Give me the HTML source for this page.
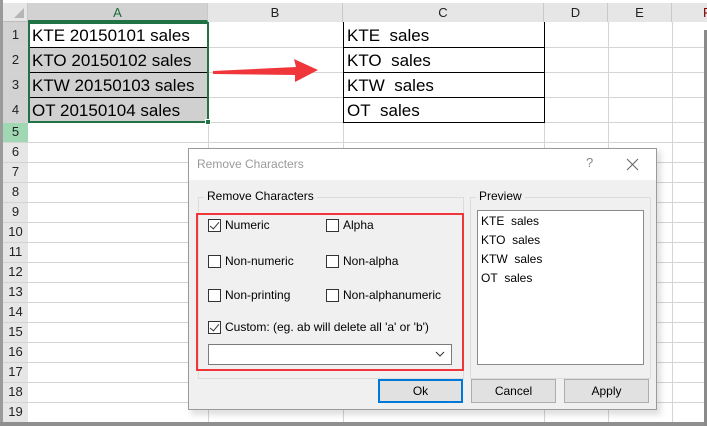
<!DOCTYPE html>
<html><head><meta charset="utf-8"><style>
*{margin:0;padding:0;box-sizing:border-box}
body{width:707px;height:426px;overflow:hidden;background:#fff;position:relative;font-family:"Liberation Sans",Arial,sans-serif}
.a{position:absolute}
.hl{position:absolute;height:1px;background:#d4d4d4}
.vl{position:absolute;width:1px;background:#d4d4d4}
.rn{position:absolute;left:3px;width:25px;text-align:center;font-size:13px;color:#222;background:#e6e6e6}
.ch{position:absolute;top:3px;height:19px;text-align:center;font-size:13px;line-height:19px;background:#e6e6e6;border-right:1px solid #c8c8c8;color:#222}
.cell{position:absolute;font-size:17px;line-height:25px;padding-left:4px;color:#000}
.dl{font-family:"Liberation Sans",Tahoma,sans-serif;font-size:12px;color:#000}
.cb{position:absolute;width:13px;height:13px;border:1px solid #333;background:#fff}
.cb.on::after{content:"";position:absolute;left:3px;top:0px;width:4px;height:8px;border:solid #333;border-width:0 1.5px 1.5px 0;transform:rotate(40deg)}
.lbl{position:absolute;font-size:12px}
.btn{position:absolute;top:379px;width:85px;height:24px;background:#e1e1e1;border:1px solid #adadad;text-align:center;line-height:22px;font-size:12px}
</style></head><body>
<div class="a" style="left:0;top:0;width:3px;height:426px;background:#9a9a9a"></div>
<div class="a" style="left:3px;top:3px;width:704px;height:19px;background:#e6e6e6;border-bottom:1px solid #bdbdbd"></div>
<div class="a" style="left:3px;top:3px;width:25px;height:19px;border-right:1px solid #c8c8c8"></div>
<div class="a" style="left:14px;top:8px;width:0;height:0;border-left:10px solid transparent;border-bottom:10px solid #b5b5b5"></div>
<div class="ch" style="left:28px;width:180px;background:#d2d2d2;color:#1e6b3a;border-bottom:2px solid #217346">A</div>
<div class="ch" style="left:208px;width:135px">B</div>
<div class="ch" style="left:343px;width:201px">C</div>
<div class="ch" style="left:544px;width:64px">D</div>
<div class="ch" style="left:608px;width:64px">E</div>
<div class="ch" style="left:672px;width:40px;text-align:left;padding-left:31px;color:#700">F</div>
<div class="a" style="left:3px;top:22px;width:25px;height:402px;background:#e6e6e6;border-right:1px solid #bdbdbd"></div>
<div class="rn" style="top:22px;height:25px;line-height:25px;background:#d2d2d2">1</div>
<div class="rn" style="top:47px;height:25px;line-height:25px;background:#d2d2d2">2</div>
<div class="rn" style="top:72px;height:25px;line-height:25px;background:#d2d2d2">3</div>
<div class="rn" style="top:97px;height:25px;line-height:25px;background:#d2d2d2">4</div>
<div class="rn" style="top:122px;height:20px;line-height:20px;background:#a0d8b3">5</div>
<div class="rn" style="top:142px;height:20px;line-height:20px">6</div>
<div class="rn" style="top:162px;height:20px;line-height:20px">7</div>
<div class="rn" style="top:182px;height:20px;line-height:20px">8</div>
<div class="rn" style="top:202px;height:20px;line-height:20px">9</div>
<div class="rn" style="top:222px;height:20px;line-height:20px">10</div>
<div class="rn" style="top:242px;height:20px;line-height:20px">11</div>
<div class="rn" style="top:262px;height:20px;line-height:20px">12</div>
<div class="rn" style="top:282px;height:20px;line-height:20px">13</div>
<div class="rn" style="top:302px;height:20px;line-height:20px">14</div>
<div class="rn" style="top:322px;height:20px;line-height:20px">15</div>
<div class="rn" style="top:342px;height:20px;line-height:20px">16</div>
<div class="rn" style="top:362px;height:20px;line-height:20px">17</div>
<div class="rn" style="top:382px;height:20px;line-height:20px">18</div>
<div class="rn" style="top:402px;height:20px;line-height:20px">19</div>
<div class="hl" style="left:3px;top:47px;width:704px"></div>
<div class="hl" style="left:3px;top:72px;width:704px"></div>
<div class="hl" style="left:3px;top:97px;width:704px"></div>
<div class="hl" style="left:3px;top:122px;width:704px"></div>
<div class="hl" style="left:3px;top:142px;width:704px"></div>
<div class="hl" style="left:3px;top:162px;width:704px"></div>
<div class="hl" style="left:3px;top:182px;width:704px"></div>
<div class="hl" style="left:3px;top:202px;width:704px"></div>
<div class="hl" style="left:3px;top:222px;width:704px"></div>
<div class="hl" style="left:3px;top:242px;width:704px"></div>
<div class="hl" style="left:3px;top:262px;width:704px"></div>
<div class="hl" style="left:3px;top:282px;width:704px"></div>
<div class="hl" style="left:3px;top:302px;width:704px"></div>
<div class="hl" style="left:3px;top:322px;width:704px"></div>
<div class="hl" style="left:3px;top:342px;width:704px"></div>
<div class="hl" style="left:3px;top:362px;width:704px"></div>
<div class="hl" style="left:3px;top:382px;width:704px"></div>
<div class="hl" style="left:3px;top:402px;width:704px"></div>
<div class="vl" style="left:208px;top:22px;height:402px"></div>
<div class="vl" style="left:343px;top:22px;height:402px"></div>
<div class="vl" style="left:544px;top:22px;height:402px"></div>
<div class="vl" style="left:608px;top:22px;height:402px"></div>
<div class="vl" style="left:672px;top:22px;height:402px"></div>
<div class="a" style="left:0;top:422px;width:707px;height:4px;background:#8f8f8f"></div>
<div class="a" style="left:704px;top:30px;width:3px;height:396px;background:#8a8a8a"></div>
<div class="a" style="left:29px;top:47px;width:179px;height:75px;background:#d0d0d0"></div>
<div class="a" style="left:29px;top:47px;width:179px;height:1px;background:#000"></div>
<div class="a" style="left:29px;top:72px;width:179px;height:1px;background:#000"></div>
<div class="a" style="left:29px;top:97px;width:179px;height:1px;background:#000"></div>
<div class="cell" style="left:28px;top:23px">KTE 20150101 sales</div>
<div class="cell" style="left:28px;top:48px">KTO 20150102 sales</div>
<div class="cell" style="left:28px;top:73px">KTW 20150103 sales</div>
<div class="cell" style="left:28px;top:98px">OT 20150104 sales</div>
<div class="a" style="left:28px;top:22px;width:181px;height:101px;border:2px solid #217346"></div>
<div class="a" style="left:205px;top:119px;width:6px;height:6px;background:#217346;border:1px solid #fff"></div>
<div class="a" style="left:343px;top:22px;width:202px;height:101px;border:1px solid #000;border-top:none"></div>
<div class="a" style="left:343px;top:47px;width:202px;height:1px;background:#000"></div>
<div class="a" style="left:343px;top:72px;width:202px;height:1px;background:#000"></div>
<div class="a" style="left:343px;top:97px;width:202px;height:1px;background:#000"></div>
<div class="cell" style="left:343px;top:23px">KTE&nbsp; sales</div>
<div class="cell" style="left:343px;top:48px">KTO&nbsp; sales</div>
<div class="cell" style="left:343px;top:73px">KTW&nbsp; sales</div>
<div class="cell" style="left:343px;top:98px">OT&nbsp; sales</div>
<svg class="a" style="left:210px;top:58px" width="115" height="30"><polygon points="3,13 86,9 84,1 108,12 85,24 85,17 3,16" fill="#f0363a"/></svg>
<div class="a" style="left:191px;top:151px;width:470px;height:264px;background:rgba(0,0,0,0.12);filter:blur(3px)"></div>
<div class="a dl" style="left:188px;top:148px;width:469px;height:262px;background:#f0f0f0;border:1px solid #9a9a9a">
  <div class="a" style="left:0;top:0;width:467px;height:31px;background:#fff"></div>
  <div class="a" style="left:8px;top:8px;color:#9a9a9a;font-size:12px">Remove Characters</div>
  <div class="a" style="left:397px;top:6px;color:#888;font-size:13px">?</div>
  <svg class="a" style="left:437px;top:9px" width="13" height="13"><path d="M1 1L12 12M12 1L1 12" stroke="#666" stroke-width="1"/></svg>
  <div class="a" style="left:9px;top:48px;width:266px;height:182px;border:1px solid #dcdcdc"></div>
  <div class="a" style="left:15px;top:40px;background:#f0f0f0;padding:0 3px">Remove Characters</div>
  <div class="a" style="left:281px;top:48px;width:181px;height:182px;border:1px solid #dcdcdc"></div>
  <div class="a" style="left:287px;top:40px;background:#f0f0f0;padding:0 3px">Preview</div>
  <div class="a" style="left:7px;top:64px;width:268px;height:158px;border:2px solid #f0363a"></div>
  <div class="cb on" style="left:19px;top:70px"></div><div class="lbl" style="left:36px;top:69px">Numeric</div>
  <div class="cb" style="left:137px;top:70px"></div><div class="lbl" style="left:154px;top:69px">Alpha</div>
  <div class="cb" style="left:19px;top:106px"></div><div class="lbl" style="left:36px;top:105px">Non-numeric</div>
  <div class="cb" style="left:137px;top:106px"></div><div class="lbl" style="left:154px;top:105px">Non-alpha</div>
  <div class="cb" style="left:19px;top:140px"></div><div class="lbl" style="left:36px;top:139px">Non-printing</div>
  <div class="cb" style="left:137px;top:140px"></div><div class="lbl" style="left:154px;top:139px">Non-alphanumeric</div>
  <div class="cb on" style="left:19px;top:172px"></div><div class="lbl" style="left:36px;top:171px">Custom: (eg. ab will delete all 'a' or 'b')</div>
  <div class="a" style="left:19px;top:195px;width:244px;height:21px;background:#fff;border:1px solid #7a7a7a"></div>
  <svg class="a" style="left:246px;top:202px" width="10" height="6"><path d="M1 1L5 5L9 1" stroke="#333" fill="none"/></svg>
  <div class="a" style="left:288px;top:61px;width:167px;height:155px;background:#fff;border:1px solid #8a8a8a;padding:1px 3px;line-height:19px">KTE&nbsp; sales<br>KTO&nbsp; sales<br>KTW&nbsp; sales<br>OT&nbsp; sales</div>
</div>
<div class="btn dl" style="left:378px;border:2px solid #0078d7;line-height:20px">Ok</div>
<div class="btn dl" style="left:471px">Cancel</div>
<div class="btn dl" style="left:564px">Apply</div>
</body></html>
